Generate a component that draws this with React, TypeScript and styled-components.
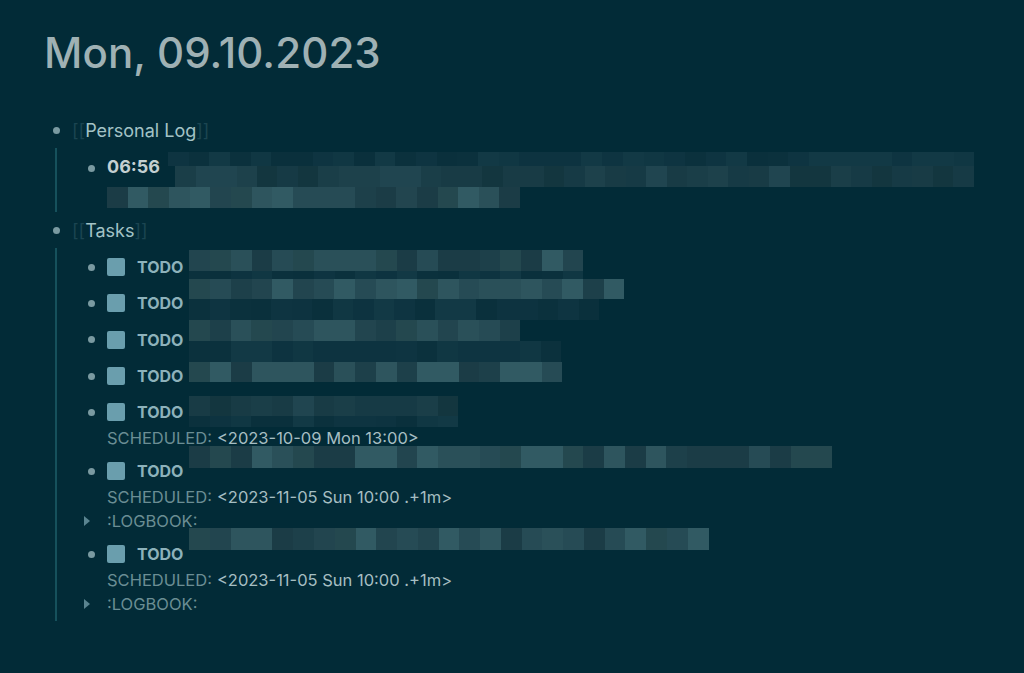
import React from 'react'
import styled, { createGlobalStyle } from 'styled-components'

const GlobalStyle = createGlobalStyle`
  html, body {
    margin: 0;
    padding: 0;
    background: #022b37;
  }
  body {
    font-family: Inter, "Noto Sans", sans-serif;
    color: #a4b5b6;
    -webkit-font-smoothing: antialiased;
  }
`

// pixelated (blurred) text is drawn as a mosaic of cells
type Band = { width: number; tone: 'bright' | 'mid' | 'dim'; seed: number; height?: number; left?: number }

const palettes: Record<string, string[]> = {
  bright: ['#1d404a', '#22454f', '#264b55', '#2a5059', '#2e555e', '#1b3c46', '#315a63', '#24484f'],
  mid: ['#163a45', '#1a3e48', '#1d414b', '#13363f', '#204550', '#183b45'],
  dim: ['#0a303c', '#0d3340', '#103743', '#0b313d', '#123945', '#0e3441'],
}

const cellColors = (band: Band) => {
  let s = band.seed * 9301 + 49297
  const count = Math.max(1, Math.round(band.width / 20.5))
  const pal = palettes[band.tone]
  const out: string[] = []
  for (let i = 0; i < count; i++) {
    s = (s * 9301 + 49297) % 233280
    out.push(pal[Math.floor((s / 233280) * pal.length)])
  }
  return out
}

const Mosaic = ({ bands, top }: { bands: Band[]; top: number }) => (
  <MosaicBox $top={top}>
    {bands.map((b, i) => (
      <BandRow key={i} $left={b.left ?? 0} $w={b.width} $h={b.height ?? 21}>
        {cellColors(b).map((c, j) => (
          <Cell key={j} $bg={c} />
        ))}
      </BandRow>
    ))}
  </MosaicBox>
)

type Task = { top: number; bands: Band[]; scheduled?: string; logbook?: boolean }

const tasks: Task[] = [
  {
    top: -4,
    bands: [
      { width: 394, tone: 'bright', seed: 3 },
      { width: 394, tone: 'dim', seed: 7 },
    ],
  },
  {
    top: -11,
    bands: [
      { width: 435, tone: 'bright', seed: 11, height: 20 },
      { width: 410, tone: 'dim', seed: 13 },
    ],
  },
  {
    top: -7,
    bands: [
      { width: 331, tone: 'bright', seed: 17 },
      { width: 372, tone: 'dim', seed: 19 },
    ],
  },
  {
    top: -1,
    bands: [{ width: 373, tone: 'bright', seed: 23, height: 20 }],
  },
  {
    top: -3,
    bands: [
      { width: 269, tone: 'mid', seed: 29, height: 20 },
      { width: 269, tone: 'dim', seed: 31, height: 11 },
    ],
    scheduled: '<2023-10-09 Mon 13:00>',
  },
  {
    top: -12,
    bands: [{ width: 643, tone: 'bright', seed: 37, height: 22 }],
    scheduled: '<2023-11-05 Sun 10:00 .+1m>',
    logbook: true,
  },
  {
    top: -13,
    bands: [{ width: 519, tone: 'bright', seed: 41, height: 22 }],
    scheduled: '<2023-11-05 Sun 10:00 .+1m>',
    logbook: true,
  },
]

const App = () => {
  return (
    <>
      <GlobalStyle />
      <Page>
        <Title>Mon, 09.10.2023</Title>

        <TopBlock>
          <Row $h={36}>
            <Bullet />
            <Content>
              <Bracket>[[</Bracket>
              <PageLink>Personal Log</PageLink>
              <Bracket>]]</Bracket>
            </Content>
          </Row>
          <Children $pt={0} $pb={4}>
            <LogBlock>
              <LogLine>
                <Bullet />
                <Content>
                  <Time>06:56</Time>
                  <Mosaic
                    top={0}
                    bands={[
                      { width: 806, tone: 'dim', seed: 5, height: 14 },
                      { width: 799, tone: 'mid', seed: 9, left: 7 },
                    ]}
                  />
                </Content>
              </LogLine>
              <WrapLine>
                <Mosaic top={0} bands={[{ width: 413, tone: 'bright', seed: 43 }]} />
              </WrapLine>
            </LogBlock>
          </Children>
        </TopBlock>

        <TopBlock>
          <Row $h={36}>
            <Bullet />
            <Content>
              <Bracket>[[</Bracket>
              <PageLink>Tasks</PageLink>
              <Bracket>]]</Bracket>
            </Content>
          </Row>
          <Children $pt={1} $pb={1}>
            {tasks.map((t, i) => (
              <TaskBlock key={i} $props={!!t.scheduled}>
                <Row $h={26.3}>
                  <Bullet />
                  <Content>
                    <Checkbox />
                    <Marker>TODO</Marker>
                    <Mosaic top={t.top} bands={t.bands} />
                  </Content>
                </Row>
                {t.scheduled && (
                  <PropLine>
                    <PropKey>SCHEDULED:</PropKey>
                    <PropValue>{t.scheduled}</PropValue>
                  </PropLine>
                )}
                {t.logbook && (
                  <PropLine>
                    <Caret />
                    <PropKey>:LOGBOOK:</PropKey>
                  </PropLine>
                )}
              </TaskBlock>
            ))}
          </Children>
        </TopBlock>
      </Page>
    </>
  )
}

const Page = styled.div`
  padding: 24px 0 0 45px;
  min-height: 673px;
  box-sizing: border-box;
`

const Title = styled.h1`
  margin: 0 0 30px -1px;
  font-size: 42px;
  line-height: 58px;
  font-weight: 500;
  color: #9fb1b4;
  letter-spacing: 0.1px;
`

const TopBlock = styled.div`
  display: flex;
  flex-direction: column;
`

const Row = styled.div<{ $h: number }>`
  display: flex;
  align-items: center;
  height: ${(p) => p.$h}px;
`

const Bullet = styled.span`
  flex: 0 0 22px;
  height: 100%;
  display: flex;
  align-items: center;
  justify-content: center;
  &::before {
    content: '';
    width: 7px;
    height: 7px;
    border-radius: 50%;
    background: #7a9aa1;
  }
`

const Content = styled.div`
  display: flex;
  align-items: center;
  margin-left: 5px;
  height: 100%;
  white-space: nowrap;
`

const Bracket = styled.span`
  font-size: 18px;
  color: #1b4551;
`

const PageLink = styled.span`
  font-size: 18px;
  color: #a3c3c6;
`

const Children = styled.div<{ $pt: number; $pb: number }>`
  margin-left: 10px;
  border-left: 2px solid #16515c;
  padding: ${(p) => p.$pt}px 0 ${(p) => p.$pb}px 23px;
  display: flex;
  flex-direction: column;
`

const LogBlock = styled.div`
  display: flex;
  flex-direction: column;
  padding-top: 4px;
`

const LogLine = styled.div`
  display: flex;
  align-items: flex-end;
  height: 35px;
  & > span {
    height: 26px;
    margin-bottom: 6px;
  }
`

const Time = styled.span`
  font-size: 18px;
  font-weight: 700;
  color: #c3d0d2;
  line-height: 26px;
  margin-bottom: 6px;
  margin-right: 8px;
`

const WrapLine = styled.div`
  display: flex;
  padding-left: 27px;
`

const TaskBlock = styled.div<{ $props: boolean }>`
  display: flex;
  flex-direction: column;
  padding: 5px 0 ${(p) => (p.$props ? 3 : 5)}px;
`

const Checkbox = styled.span`
  width: 18px;
  height: 18px;
  border-radius: 2px;
  background: #6a9ead;
  margin-right: 12px;
`

const Marker = styled.span`
  font-size: 16px;
  font-weight: 700;
  color: #8db2bb;
  margin-right: 6px;
`

const MosaicBox = styled.div<{ $top: number }>`
  display: flex;
  flex-direction: column;
  align-self: flex-start;
  margin-top: ${(p) => p.$top}px;
`

const BandRow = styled.div<{ $left: number; $w: number; $h: number }>`
  display: flex;
  width: ${(p) => p.$w}px;
  height: ${(p) => p.$h}px;
  margin-left: ${(p) => p.$left}px;
`

const Cell = styled.span<{ $bg: string }>`
  flex: 1;
  background: ${(p) => p.$bg};
`

const PropLine = styled.div`
  display: flex;
  align-items: center;
  height: 24.5px;
  padding-left: 27px;
  font-size: 16.5px;
  white-space: nowrap;
`

const PropKey = styled.span`
  color: #6b8e94;
`

const PropValue = styled.span`
  color: #a6bec2;
  margin-left: 5px;
`

const Caret = styled.span`
  width: 0;
  height: 0;
  border-top: 5px solid transparent;
  border-bottom: 5px solid transparent;
  border-left: 6px solid #5a8490;
  margin-left: -23px;
  margin-right: 17px;
`

export default App
